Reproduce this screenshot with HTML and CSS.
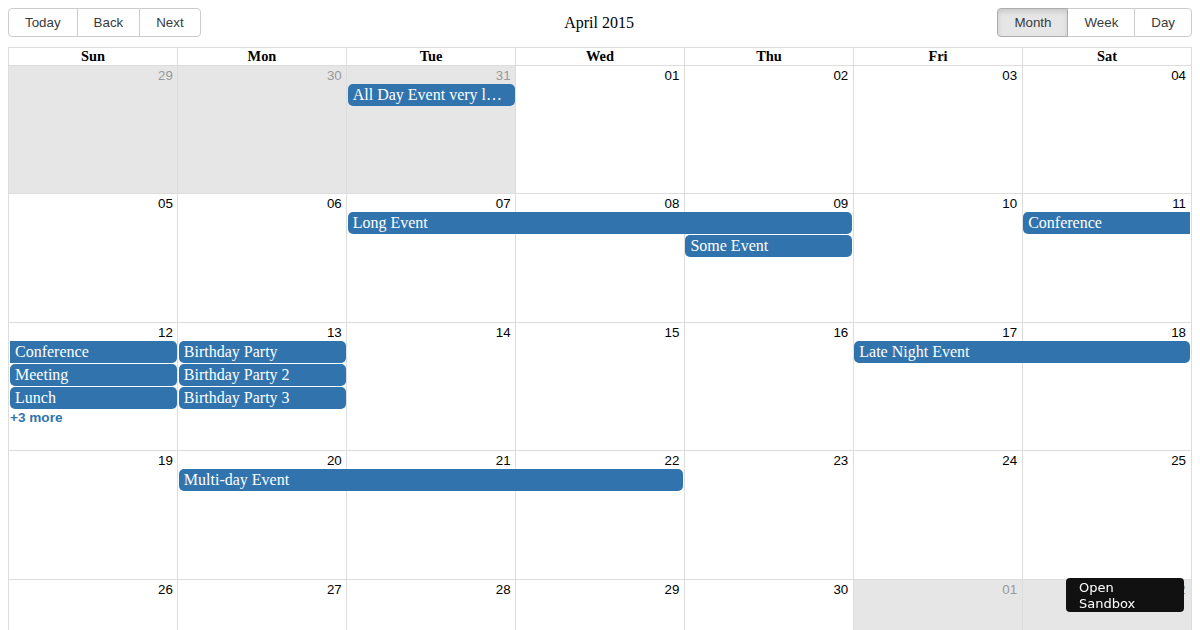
FILE: index.html
```html
<!DOCTYPE html>
<html lang="en">
<head>
<meta charset="utf-8">
<title>April 2015</title>
<link rel="stylesheet" href="styles.css">
</head>
<body>
<div class="calendar">
  <div class="toolbar">
    <span class="btn-group">
      <button type="button">Today</button>
      <button type="button">Back</button>
      <button type="button">Next</button>
    </span>
    <span class="label">April 2015</span>
    <span class="btn-group">
      <button type="button" class="active">Month</button>
      <button type="button">Week</button>
      <button type="button">Day</button>
    </span>
  </div>
  <div class="month">
    <div class="head">
      <div class="hd">Sun</div><div class="hd">Mon</div><div class="hd">Tue</div><div class="hd">Wed</div><div class="hd">Thu</div><div class="hd">Fri</div><div class="hd">Sat</div>
    </div>

    <div class="week">
      <div class="bgrow">
        <div class="bg off"></div><div class="bg off"></div><div class="bg off"></div><div class="bg"></div><div class="bg"></div><div class="bg"></div><div class="bg"></div>
      </div>
      <div class="content">
        <div class="date c1 offd">29</div><div class="date c2 offd">30</div><div class="date c3 offd">31</div><div class="date c4">01</div><div class="date c5">02</div><div class="date c6">03</div><div class="date c7">04</div>
        <div class="ev c3 r2">All Day Event very long title</div>
      </div>
    </div>

    <div class="week">
      <div class="bgrow">
        <div class="bg"></div><div class="bg"></div><div class="bg"></div><div class="bg"></div><div class="bg"></div><div class="bg"></div><div class="bg"></div>
      </div>
      <div class="content">
        <div class="date c1">05</div><div class="date c2">06</div><div class="date c3">07</div><div class="date c4">08</div><div class="date c5">09</div><div class="date c6">10</div><div class="date c7">11</div>
        <div class="ev c3 s3 r2">Long Event</div>
        <div class="ev c5 r3">Some Event</div>
        <div class="ev c7 r2 cont-after">Conference</div>
      </div>
    </div>

    <div class="week">
      <div class="bgrow">
        <div class="bg"></div><div class="bg"></div><div class="bg"></div><div class="bg"></div><div class="bg"></div><div class="bg"></div><div class="bg"></div>
      </div>
      <div class="content">
        <div class="date c1">12</div><div class="date c2">13</div><div class="date c3">14</div><div class="date c4">15</div><div class="date c5">16</div><div class="date c6">17</div><div class="date c7">18</div>
        <div class="ev c1 r2 cont-prior">Conference</div>
        <div class="ev c1 r3">Meeting</div>
        <div class="ev c1 r4">Lunch</div>
        <button type="button" class="more c1 r5">+3 more</button>
        <div class="ev c2 r2">Birthday Party</div>
        <div class="ev c2 r3">Birthday Party 2</div>
        <div class="ev c2 r4">Birthday Party 3</div>
        <div class="ev c6 s2 r2">Late Night Event</div>
      </div>
    </div>

    <div class="week">
      <div class="bgrow">
        <div class="bg"></div><div class="bg"></div><div class="bg"></div><div class="bg"></div><div class="bg"></div><div class="bg"></div><div class="bg"></div>
      </div>
      <div class="content">
        <div class="date c1">19</div><div class="date c2">20</div><div class="date c3">21</div><div class="date c4">22</div><div class="date c5">23</div><div class="date c6">24</div><div class="date c7">25</div>
        <div class="ev c2 s3 r2">Multi-day Event</div>
      </div>
    </div>

    <div class="week">
      <div class="bgrow">
        <div class="bg"></div><div class="bg"></div><div class="bg"></div><div class="bg"></div><div class="bg"></div><div class="bg off"></div><div class="bg off"></div>
      </div>
      <div class="content">
        <div class="date c1">26</div><div class="date c2">27</div><div class="date c3">28</div><div class="date c4">29</div><div class="date c5">30</div><div class="date c6 offd">01</div><div class="date c7 offd">02</div>
      </div>
    </div>
  </div>
</div>
<a class="sandbox" href="#">Open Sandbox</a>
</body>
</html>
```

FILE: styles.css
```css
html {
  overflow: hidden;
}
body {
  margin: 8px;
  font-family: "Liberation Serif", "Times New Roman", serif;
  font-size: 16px;
  color: #000;
}
.calendar {
  height: 700px;
  display: flex;
  flex-direction: column;
}
.toolbar {
  display: flex;
  align-items: center;
  margin-bottom: 10px;
  font-size: 16px;
}
.label {
  flex: 1;
  text-align: center;
  padding: 0 10px;
}
.btn-group {
  display: inline-flex;
}
.btn-group button {
  font-family: "Liberation Sans", Arial, sans-serif;
  font-size: 13.333px;
  line-height: 15px;
  color: #373a3c;
  background: #fff;
  border: 1px solid #ccc;
  padding: 6px 16px;
  margin: 0;
  border-radius: 0;
}
.btn-group button + button {
  margin-left: -1px;
}
.btn-group button:first-child {
  border-radius: 4px 0 0 4px;
}
.btn-group button:last-child {
  border-radius: 0 4px 4px 0;
}
.btn-group button.active {
  background: #e6e6e6;
  border-color: #adadad;
  box-shadow: inset 0 3px 5px rgba(0, 0, 0, 0.125);
  position: relative;
}
.month {
  flex: 1;
  min-height: 0;
  display: flex;
  flex-direction: column;
  border: 1px solid #ddd;
}
.head {
  display: grid;
  grid-template-columns: 168px repeat(6, 169px);
}
.hd {
  font-weight: bold;
  font-size: 14.4px;
  line-height: 17px;
  text-align: center;
  padding: 0 3px;
  border-bottom: 1px solid #ddd;
}
.hd + .hd {
  border-left: 1px solid #ddd;
}
.week {
  flex: 1 1 0;
  min-height: 0;
  overflow: hidden;
  display: grid;
  grid-template-columns: minmax(0, 1fr);
  grid-template-rows: minmax(0, 1fr);
}
.week + .week {
  border-top: 1px solid #ddd;
}
.bgrow {
  grid-area: 1 / 1;
  display: grid;
  grid-template-columns: 168px repeat(6, 169px);
}
.bg + .bg {
  border-left: 1px solid #ddd;
}
.bg.off {
  background: #e6e6e6;
}
.content {
  grid-area: 1 / 1;
  display: grid;
  grid-template-columns: repeat(7, minmax(0, 1fr));
  grid-template-rows: 18px 23px 23px 23px 23px;
  align-content: start;
}
.c1 { grid-column-start: 1; }
.c2 { grid-column-start: 2; }
.c3 { grid-column-start: 3; }
.c4 { grid-column-start: 4; }
.c5 { grid-column-start: 5; }
.c6 { grid-column-start: 6; }
.c7 { grid-column-start: 7; }
.s2 { grid-column-end: span 2; }
.s3 { grid-column-end: span 3; }
.r2 { grid-row-start: 2; }
.r3 { grid-row-start: 3; }
.r4 { grid-row-start: 4; }
.r5 { grid-row-start: 5; }
.date {
  grid-row-start: 1;
  text-align: right;
  padding: 1px 5px 0 0;
  font-family: "Liberation Sans", Arial, sans-serif;
  font-size: 13.333px;
  line-height: 17px;
  color: #000;
}
.date.offd {
  color: #999;
}
.ev {
  min-width: 0;
  box-sizing: border-box;
  height: 22px;
  margin: 0 1px 1px 1px;
  padding: 2px 5px;
  background: #3174ad;
  color: #fff;
  border-radius: 5px;
  font-size: 16px;
  line-height: 18px;
  white-space: nowrap;
  overflow: hidden;
  text-overflow: ellipsis;
}
.cont-after {
  border-top-right-radius: 0;
  border-bottom-right-radius: 0;
}
.cont-prior {
  border-top-left-radius: 0;
  border-bottom-left-radius: 0;
}
.more {
  justify-self: start;
  align-self: start;
  margin: 0 0 0 1px;
  padding: 0;
  border: 0;
  background: none;
  font-family: "Liberation Sans", Arial, sans-serif;
  font-weight: bold;
  font-size: 13.6px;
  line-height: 15px;
  color: #3174ad;
}
.sandbox {
  position: fixed;
  right: 16px;
  bottom: 18px;
  width: 118px;
  height: 34px;
  box-sizing: border-box;
  padding: 2px 13px 0;
  background: #111;
  color: #fff;
  border-radius: 4px;
  font-family: "DejaVu Sans", Verdana, sans-serif;
  font-size: 13px;
  line-height: 16px;
  text-decoration: none;
}
```
